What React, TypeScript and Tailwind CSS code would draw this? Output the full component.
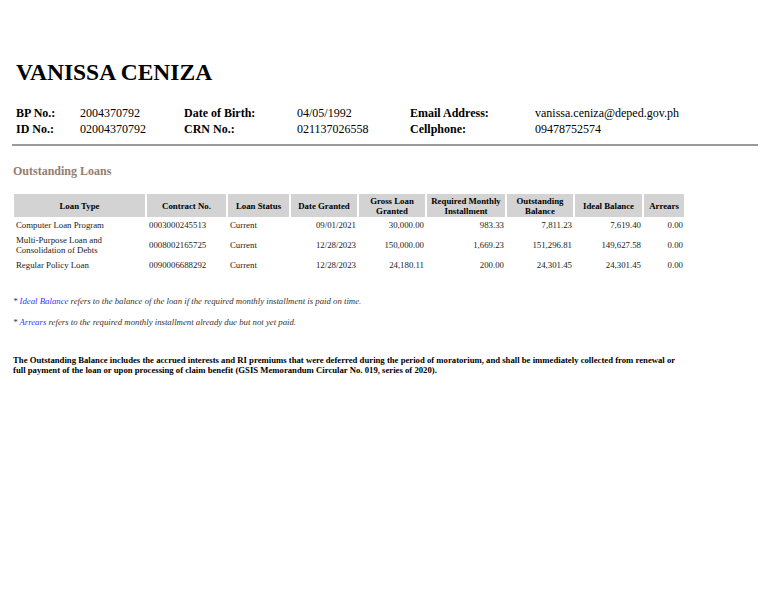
import React from 'react';

interface Loan {
  type: React.ReactNode;
  contract: string;
  status: string;
  granted: string;
  gross: string;
  monthly: string;
  outstanding: string;
  ideal: string;
  arrears: string;
}

const LOANS: Loan[] = [
  { type: 'Computer Loan Program', contract: '0003000245513', status: 'Current', granted: '09/01/2021', gross: '30,000.00', monthly: '983.33', outstanding: '7,811.23', ideal: '7,619.40', arrears: '0.00' },
  { type: <>Multi-Purpose Loan and<br />Consolidation of Debts</>, contract: '0008002165725', status: 'Current', granted: '12/28/2023', gross: '150,000.00', monthly: '1,669.23', outstanding: '151,296.81', ideal: '149,627.58', arrears: '0.00' },
  { type: 'Regular Policy Loan', contract: '0090006688292', status: 'Current', granted: '12/28/2023', gross: '24,180.11', monthly: '200.00', outstanding: '24,301.45', ideal: '24,301.45', arrears: '0.00' },
];

const HEADERS: { label: React.ReactNode; w: string }[] = [
  { label: 'Loan Type', w: 'w-[131px]' },
  { label: 'Contract No.', w: 'w-[79px]' },
  { label: 'Loan Status', w: 'w-[61px]' },
  { label: 'Date Granted', w: 'w-[66px]' },
  { label: <>Gross Loan<br />Granted</>, w: 'w-[66px]' },
  { label: <>Required Monthly<br />Installment</>, w: 'w-[78px]' },
  { label: <>Outstanding<br />Balance</>, w: 'w-[66px]' },
  { label: 'Ideal Balance', w: 'w-[67px]' },
  { label: 'Arrears', w: 'w-[40px]' },
];

function InfoPair({ label, value, lw, vw }: { label: string; value: string; lw: string; vw: string }) {
  return (
    <div className="flex">
      <span className={`${lw} font-bold`}>{label}</span>
      <span className={vw}>{value}</span>
    </div>
  );
}

export default function App() {
  return (
    <div
      className="min-h-[594px] bg-white text-black pl-[12px] pr-[10px] pt-[58px]"
      style={{ fontFamily: '"Liberation Serif", "Times New Roman", serif' }}
    >
      {/* Name */}
      <h1 className="pl-[4px] text-[23.5px] font-bold leading-[28px]">VANISSA CENIZA</h1>

      {/* Member info */}
      <div className="mt-[19px] pl-[4px] flex text-[12px] leading-[16px]">
        <div className="flex flex-col">
          <InfoPair label="BP No.:" value="2004370792" lw="w-[64px]" vw="w-[104px]" />
          <InfoPair label="ID No.:" value="02004370792" lw="w-[64px]" vw="w-[104px]" />
        </div>
        <div className="flex flex-col">
          <InfoPair label="Date of Birth:" value="04/05/1992" lw="w-[113px]" vw="w-[113px]" />
          <InfoPair label="CRN No.:" value="021137026558" lw="w-[113px]" vw="w-[113px]" />
        </div>
        <div className="flex flex-col">
          <InfoPair label="Email Address:" value="vanissa.ceniza@deped.gov.ph" lw="w-[125px]" vw="w-[200px]" />
          <InfoPair label="Cellphone:" value="09478752574" lw="w-[125px]" vw="w-[200px]" />
        </div>
      </div>
      <div className="mt-[7px] h-[2px] bg-[#9a9a9a]" />

      {/* Outstanding loans */}
      <h2 className="mt-[17px] pl-[1px] text-[12px] font-bold leading-[16px] text-[#947e6e]">Outstanding Loans</h2>

      <table className="mt-[13px] border-separate border-spacing-[2px] text-[8.8px] leading-[10px]">
        <thead>
          <tr>
            {HEADERS.map((h, i) => (
              <th key={i} className={`${h.w} h-[23px] bg-[#d3d3d3] font-bold text-center px-[2px] align-middle`}>
                {h.label}
              </th>
            ))}
          </tr>
        </thead>
        <tbody className="text-[#222]">
          {LOANS.map((l, i) => (
            <tr key={i} className={i === 1 ? 'h-[24px]' : 'h-[12px]'}>
              <td className="px-[2px] py-0 text-left align-middle">{l.type}</td>
              <td className="px-[2px] py-0 text-left align-middle">{l.contract}</td>
              <td className="px-[2px] py-0 text-left align-middle">{l.status}</td>
              <td className="px-[1px] py-0 text-right align-middle">{l.granted}</td>
              <td className="px-[1px] py-0 text-right align-middle">{l.gross}</td>
              <td className="px-[1px] py-0 text-right align-middle">{l.monthly}</td>
              <td className="px-[1px] py-0 text-right align-middle">{l.outstanding}</td>
              <td className="px-[1px] py-0 text-right align-middle">{l.ideal}</td>
              <td className="px-[1px] py-0 text-right align-middle">{l.arrears}</td>
            </tr>
          ))}
        </tbody>
      </table>

      {/* Notes */}
      <p className="mt-[23px] pl-[1px] text-[8.75px] italic leading-[10px] text-[#333]">
        * <span className="text-[#3535ff]">Ideal Balance</span> refers to the balance of the loan if the required monthly installment is paid on time.
      </p>
      <p className="mt-[11px] pl-[1px] text-[8.75px] italic leading-[10px] text-[#333]">
        * <span className="text-[#3535ff]">Arrears</span> refers to the required monthly installment already due but not yet paid.
      </p>

      <p className="mt-[28px] pl-[1px] w-[676px] text-[8.7px] font-bold leading-[10px]">
        The Outstanding Balance includes the accrued interests and RI premiums that were deferred during the period of moratorium, and shall be immediately collected from renewal or full payment of the loan or upon processing of claim benefit (GSIS Memorandum Circular No. 019, series of 2020).
      </p>
    </div>
  );
}
